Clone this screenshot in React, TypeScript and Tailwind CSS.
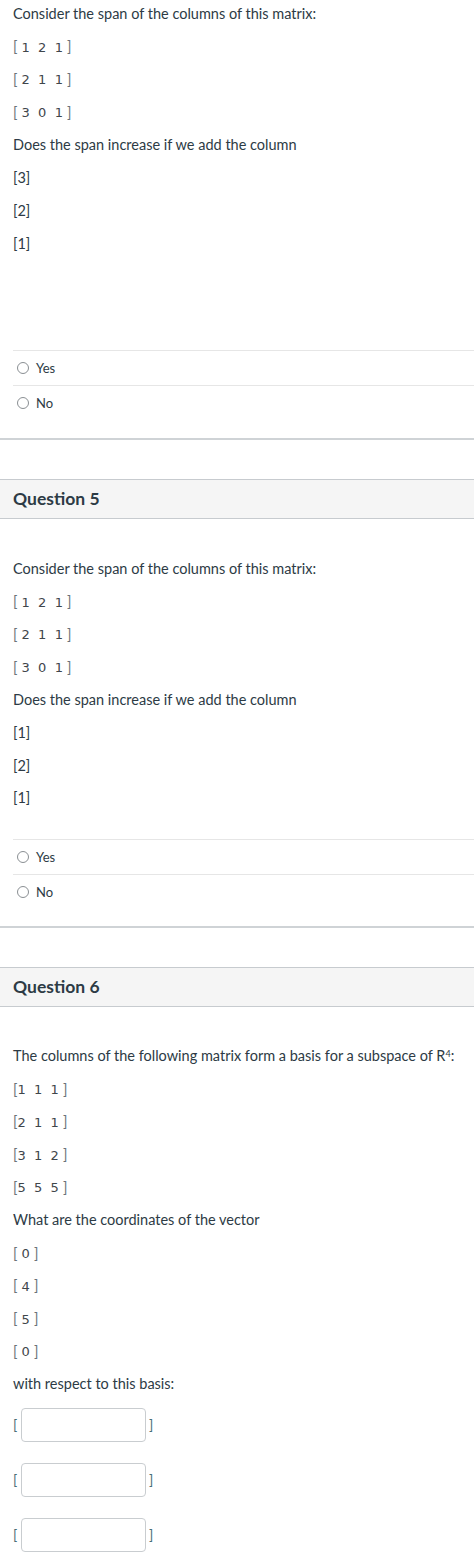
import React from 'react';

const textFont = { fontFamily: 'Lato, "Open Sans", sans-serif' };

function P({ children }: { children?: React.ReactNode }) {
  return <p className="text-[14.5px] leading-[20.8px] h-[20.8px] mb-3 text-[#2d3b45]">{children}</p>;
}

function Row({ cells }: { cells: string }) {
  return (
    <p className="flex items-center h-[20.8px] mb-3 text-[14.5px] text-[#3f464b] whitespace-pre">
      <span className="text-[#6b7378]">[</span>
      <span style={{ fontFamily: '"DejaVu Sans", sans-serif' }} className="text-[13px] leading-none">{cells}</span>
      <span className="text-[#6b7378]">]</span>
    </p>
  );
}

function Answers({ gap, tail }: { gap: string; tail: string }) {
  return (
    <div className={`${gap} ml-[13px]`}>
      {['Yes', 'No'].map((a) => (
        <label key={a} className="flex items-center h-[35px] border-t border-[#e6e6e6] text-[13px] text-[#2d3b45]">
          <span className="ml-[4px] mr-[7px] w-[12px] h-[12px] rounded-full border border-[#8a8f93] bg-white" />
          {a}
        </label>
      ))}
      <div className={tail} />
    </div>
  );
}

function Header({ n }: { n: number }) {
  return (
    <div className="h-[40px] bg-[#f5f5f5] border-y border-[#c7cbcf] flex items-center px-[13px]">
      <h2 className="text-[17.5px] font-bold text-[#2d3b45]">Question {n}</h2>
    </div>
  );
}

function Input() {
  return (
    <div className="flex items-center h-[35px] mb-[20px] pl-[13px]">
      <span className="text-[14px] text-[#4b6f76] w-[8px]">[</span>
      <div className="w-[125px] h-[34px] border border-[#c9cdd0] rounded-[4px] bg-white" />
      <span className="text-[14px] text-[#4b6f76] ml-[3px]">]</span>
    </div>
  );
}

export default function App() {
  return (
    <div className="w-[474px] bg-white" style={textFont}>
      {/* Question 4 (cut off at top) */}
      <div className="px-[13px] pt-[4px]">
        <P>Consider the span of the columns of this matrix:</P>
        <Row cells=" 1  2  1 " />
        <Row cells=" 2  1  1 " />
        <Row cells=" 3  0  1 " />
        <P>Does the span increase if we add the column</P>
        <P>[3]</P>
        <P>[2]</P>
        <P>[1]</P>
        <div className="h-[62px]" />
      </div>
      <Answers gap="mt-[22px]" tail="h-[18px]" />
      <div className="h-[2px] bg-[#cfd3d6] mb-[39px]" />

      <Header n={5} />
      <div className="px-[13px] pt-[39.5px]">
        <P>Consider the span of the columns of this matrix:</P>
        <Row cells=" 1  2  1 " />
        <Row cells=" 2  1  1 " />
        <Row cells=" 3  0  1 " />
        <P>Does the span increase if we add the column</P>
        <P>[1]</P>
        <P>[2]</P>
        <P>[1]</P>
      </div>
      <Answers gap="mt-[30px]" tail="h-[17px]" />
      <div className="h-[2px] bg-[#cfd3d6] mb-[39px]" />

      <Header n={6} />
      <div className="px-[13px] pt-[39px]">
        <P>
          The columns of the following matrix form a basis for a subspace of R<sup className="text-[9px]">4</sup>:
        </P>
        <Row cells="1  1  1 " />
        <Row cells="2  1  1 " />
        <Row cells="3  1  2 " />
        <Row cells="5  5  5 " />
        <P>What are the coordinates of the vector</P>
        <Row cells=" 0 " />
        <Row cells=" 4 " />
        <Row cells=" 5 " />
        <Row cells=" 0 " />
        <P>with respect to this basis:</P>
      </div>
      <div>
        <Input />
        <Input />
        <Input />
      </div>
    </div>
  );
}
